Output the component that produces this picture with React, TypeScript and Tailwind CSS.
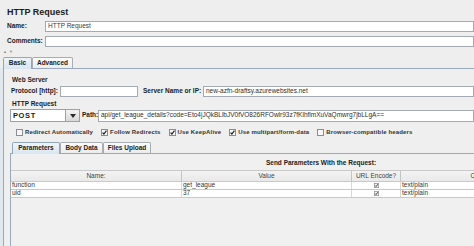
import React from "react";

function Check({ checked, size = 7 }: { checked: boolean; size?: number }) {
  return (
    <svg width={size} height={size} viewBox="0 0 7 7" className="shrink-0">
      <rect x="0.5" y="0.5" width="6" height="6" fill="#f7f7f7" stroke="#8a8d92" />
      {checked && <path d="M1.6 3.6 L2.9 5 L5.4 1.7" fill="none" stroke="#202020" strokeWidth="1.2" />}
    </svg>
  );
}

function Tab({ label, active, w }: { label: string; active?: boolean; w: string }) {
  return (
    <div
      className={`${w} flex items-center justify-center font-bold border border-b-0 rounded-t-[2px] ${
        active
          ? "h-[12px] bg-gradient-to-b from-[#eef4fa] to-[#d9e5f1] border-[#93a7bb] -mb-px relative z-10"
          : "h-[11px] bg-gradient-to-b from-[#fbfbfb] to-[#ececec] border-[#a8adb3]"
      }`}
    >
      {label}
    </div>
  );
}

const boxes = [
  { label: "Redirect Automatically", checked: false },
  { label: "Follow Redirects", checked: true },
  { label: "Use KeepAlive", checked: true },
  { label: "Use multipart/form-data", checked: true },
  { label: "Browser-compatible headers", checked: false },
];

const params = [
  { name: "function", value: "get_league" },
  { name: "uid", value: "37" },
];

export default function App() {
  return (
    <div className="w-[474px] h-[246px] overflow-hidden bg-[#eeeeee] text-[#1c1c1c] font-['Liberation_Sans',Arial,sans-serif] text-[6.5px] leading-none">
      <div className="h-[20px] pl-[7px] pt-[8px] text-[9px] leading-[9px] font-bold">HTTP Request</div>

      <div className="flex items-center mt-[1px] h-[11px]">
        <div className="w-[45px] pl-[7px] font-bold">Name:</div>
        <div className="flex-1 h-[11px] flex items-center pl-[2px] bg-white border border-[#a4aab2] text-[#3a3a3a]">
          HTTP Request
        </div>
      </div>
      <div className="flex items-center mt-[4px] h-[11px]">
        <div className="w-[45px] pl-[7px] font-bold">Comments:</div>
        <div className="flex-1 h-[11px] bg-white border border-[#a4aab2]" />
      </div>

      <div className="h-[9px] pl-[3px] flex items-center gap-[2px] text-[#8a8a8a] text-[4px]">
        <span>▲</span>
        <span>▼</span>
      </div>

      <div className="flex items-end pl-[3px] h-[12px]">
        <Tab label="Basic" active w="w-[29px]" />
        <Tab label="Advanced" w="w-[41px]" />
      </div>

      <div className="flex h-[178px]">
        <div className="w-[3px] bg-[#e2e8ef]" />
        <div className="flex-1 border-l border-t border-[#97a9bb] bg-[#efefef] min-w-0">
          <div className="mt-[6px] pl-[8px] h-[10px] flex items-center font-bold">Web Server</div>
          <div className="flex items-center mt-[1px] h-[11px]">
            <div className="w-[56px] pl-[7px] font-bold">Protocol [http]:</div>
            <div className="w-[78px] h-[11px] bg-white border border-[#a4aab2]" />
            <div className="ml-[5px] w-[60px] font-bold">Server Name or IP:</div>
            <div className="flex-1 h-[11px] flex items-center pl-[2px] bg-white border border-[#a4aab2] text-[#2e2e2e]">
              new-azfn-draftsy.azurewebsites.net
            </div>
          </div>

          <div className="mt-[2px] pl-[8px] h-[10px] flex items-center font-bold">HTTP Request</div>
          <div className="flex items-center h-[13px] pl-[6px]">
            <div className="w-[56px] h-[13px] flex items-center pl-[2px] bg-white border border-[#9aa1a9] font-bold text-[7.5px] tracking-[0.6px]">
              POST
            </div>
            <div className="w-[14px] h-[13px] flex items-center justify-center bg-gradient-to-b from-[#f4f4f4] to-[#d8d8d8] border border-l-0 border-[#9aa1a9]">
              <svg width="6" height="4" viewBox="0 0 6 4">
                <path d="M0 0 H6 L3 4 Z" fill="#2a2a2a" />
              </svg>
            </div>
            <div className="w-[18px] pl-[2px] font-bold">Path:</div>
            <div className="flex-1 h-[12px] flex items-center pl-[2px] bg-white border border-[#a4aab2] whitespace-nowrap overflow-hidden text-[#2e2e2e]">
              api/get_league_details?code=Eto4jJQkBLlbJV0fVO826RFOwlr93z7fKlhflmXuVaQmwrg7jbLLgA==
            </div>
          </div>

          <div className="mt-[6px] h-[8px] pl-[12px] flex items-center gap-[8px] text-[6px] tracking-[0.15px] font-bold text-[#333]">
            {boxes.map((b) => (
              <div key={b.label} className="flex items-center gap-[2px] whitespace-nowrap">
                <Check checked={b.checked} />
                <span>{b.label}</span>
              </div>
            ))}
          </div>

          <div className="mt-[6px] flex items-end pl-[8px] h-[11px]">
            <Tab label="Parameters" active w="w-[48px]" />
            <Tab label="Body Data" w="w-[43px]" />
            <Tab label="Files Upload" w="w-[48px]" />
          </div>

          <div className="ml-[6px] h-[200px] border-l border-t border-[#97a9bb] bg-[#f0f0f0] overflow-hidden">
            <div className="w-[620px]">
              <div className="pt-[6px] h-[16px] text-center font-bold">Send Parameters With the Request:</div>
              <div className="flex h-[12px] bg-gradient-to-b from-[#f3f3f3] to-[#e9e9e9] border-t border-b border-[#c9c9c9] text-[#444]">
                <div className="w-[171px] flex items-center justify-center border-r border-[#c4c4c4]">Name:</div>
                <div className="w-[170px] flex items-center justify-center border-r border-[#c4c4c4]">Value</div>
                <div className="w-[49px] flex items-center justify-center border-r border-[#c4c4c4]">URL Encode?</div>
                <div className="w-[178px] flex items-center justify-center">Content-Type</div>
              </div>
              {params.map((p) => (
                <div key={p.name} className="flex h-[8px] bg-white border-b border-[#c8c8c8] text-[#333]">
                  <div className="w-[171px] pl-[1px] flex items-center border-r border-[#d8d8d8]">{p.name}</div>
                  <div className="w-[170px] pl-[1px] flex items-center border-r border-[#d8d8d8]">{p.value}</div>
                  <div className="w-[49px] flex items-center justify-center border-r border-[#d8d8d8]">
                    <Check checked size={5} />
                  </div>
                  <div className="w-[178px] pl-[1px] flex items-center">text/plain</div>
                </div>
              ))}
            </div>
          </div>
        </div>
      </div>
    </div>
  );
}
